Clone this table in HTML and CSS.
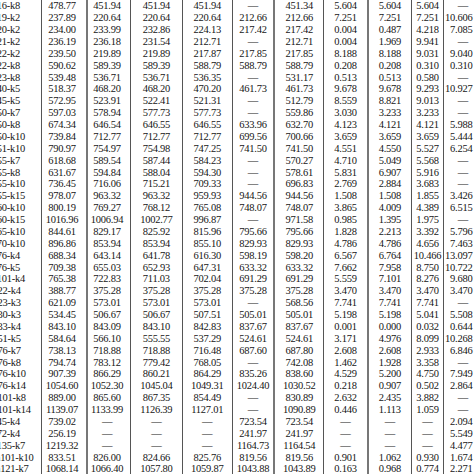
FILE: index.html
```html
<!DOCTYPE html>
<html>
<head>
<meta charset="utf-8">
<link rel="stylesheet" href="styles.css">
</head>
<body>
<div class="tbl">
<div class="r"><span>P-n16-k8</span><span>478.77</span><span>451.94</span><span>451.94</span><span>451.94</span><span class="d">—</span><span>451.34</span><span>5.604</span><span>5.604</span><span>5.604</span><span class="d">—</span></div>
<div class="r"><span>P-n19-k2</span><span>237.89</span><span>220.64</span><span>220.64</span><span>220.64</span><span>212.66</span><span>212.66</span><span>7.251</span><span>7.251</span><span>7.251</span><span>10.606</span></div>
<div class="r"><span>P-n20-k2</span><span>234.00</span><span>233.99</span><span>232.86</span><span>224.13</span><span>217.42</span><span>217.42</span><span>0.004</span><span>0.487</span><span>4.218</span><span>7.085</span></div>
<div class="r"><span>P-n21-k2</span><span>236.19</span><span>236.18</span><span>231.54</span><span>212.71</span><span class="d">—</span><span>212.71</span><span>0.004</span><span>1.969</span><span>9.941</span><span class="d">—</span></div>
<div class="r"><span>P-n22-k2</span><span>239.50</span><span>219.89</span><span>219.89</span><span>217.87</span><span>217.85</span><span>217.85</span><span>8.188</span><span>8.188</span><span>9.031</span><span>9.040</span></div>
<div class="r"><span>P-n22-k8</span><span>590.62</span><span>589.39</span><span>589.39</span><span>588.79</span><span>588.79</span><span>588.79</span><span>0.208</span><span>0.208</span><span>0.310</span><span>0.310</span></div>
<div class="r"><span>P-n23-k8</span><span>539.48</span><span>536.71</span><span>536.71</span><span>536.35</span><span class="d">—</span><span>531.17</span><span>0.513</span><span>0.513</span><span>0.580</span><span class="d">—</span></div>
<div class="r"><span>P-n40-k5</span><span>518.37</span><span>468.20</span><span>468.20</span><span>470.20</span><span>461.73</span><span>461.73</span><span>9.678</span><span>9.678</span><span>9.293</span><span>10.927</span></div>
<div class="r"><span>P-n45-k5</span><span>572.95</span><span>523.91</span><span>522.41</span><span>521.31</span><span class="d">—</span><span>512.79</span><span>8.559</span><span>8.821</span><span>9.013</span><span class="d">—</span></div>
<div class="r"><span>P-n50-k7</span><span>597.03</span><span>578.94</span><span>577.73</span><span>577.73</span><span class="d">—</span><span>559.86</span><span>3.030</span><span>3.233</span><span>3.233</span><span class="d">—</span></div>
<div class="r"><span>P-n50-k8</span><span>674.34</span><span>646.54</span><span>646.55</span><span>646.55</span><span>633.96</span><span>632.70</span><span>4.123</span><span>4.121</span><span>4.121</span><span>5.988</span></div>
<div class="r"><span>P-n50-k10</span><span>739.84</span><span>712.77</span><span>712.77</span><span>712.77</span><span>699.56</span><span>700.66</span><span>3.659</span><span>3.659</span><span>3.659</span><span>5.444</span></div>
<div class="r"><span>P-n51-k10</span><span>790.97</span><span>754.97</span><span>754.98</span><span>747.25</span><span>741.50</span><span>741.50</span><span>4.551</span><span>4.550</span><span>5.527</span><span>6.254</span></div>
<div class="r"><span>P-n55-k7</span><span>618.68</span><span>589.54</span><span>587.44</span><span>584.23</span><span class="d">—</span><span>570.27</span><span>4.710</span><span>5.049</span><span>5.568</span><span class="d">—</span></div>
<div class="r"><span>P-n55-k8</span><span>631.67</span><span>594.84</span><span>588.04</span><span>594.30</span><span class="d">—</span><span>578.61</span><span>5.831</span><span>6.907</span><span>5.916</span><span class="d">—</span></div>
<div class="r"><span>P-n55-k10</span><span>736.45</span><span>716.06</span><span>715.21</span><span>709.33</span><span class="d">—</span><span>696.83</span><span>2.769</span><span>2.884</span><span>3.683</span><span class="d">—</span></div>
<div class="r"><span>P-n55-k15</span><span>978.07</span><span>963.32</span><span>963.32</span><span>959.93</span><span>944.56</span><span>944.56</span><span>1.508</span><span>1.508</span><span>1.855</span><span>3.426</span></div>
<div class="r"><span>P-n60-k10</span><span>800.19</span><span>769.27</span><span>768.12</span><span>765.08</span><span>748.07</span><span>748.07</span><span>3.865</span><span>4.009</span><span>4.389</span><span>6.515</span></div>
<div class="r"><span>P-n60-k15</span><span>1016.96</span><span>1006.94</span><span>1002.77</span><span>996.87</span><span class="d">—</span><span>971.58</span><span>0.985</span><span>1.395</span><span>1.975</span><span class="d">—</span></div>
<div class="r"><span>P-n65-k10</span><span>844.61</span><span>829.17</span><span>825.92</span><span>815.96</span><span>795.66</span><span>795.66</span><span>1.828</span><span>2.213</span><span>3.392</span><span>5.796</span></div>
<div class="r"><span>P-n70-k10</span><span>896.86</span><span>853.94</span><span>853.94</span><span>855.10</span><span>829.93</span><span>829.93</span><span>4.786</span><span>4.786</span><span>4.656</span><span>7.463</span></div>
<div class="r"><span>P-n76-k4</span><span>688.34</span><span>643.14</span><span>641.78</span><span>616.30</span><span>598.19</span><span>598.20</span><span>6.567</span><span>6.764</span><span>10.466</span><span>13.097</span></div>
<div class="r"><span>P-n76-k5</span><span>709.38</span><span>655.03</span><span>652.93</span><span>647.31</span><span>633.32</span><span>633.32</span><span>7.662</span><span>7.958</span><span>8.750</span><span>10.722</span></div>
<div class="r"><span>P-n101-k4</span><span>765.38</span><span>722.83</span><span>711.03</span><span>702.04</span><span>691.29</span><span>691.29</span><span>5.559</span><span>7.101</span><span>8.276</span><span>9.680</span></div>
<div class="r"><span>E-n22-k4</span><span>388.77</span><span>375.28</span><span>375.28</span><span>375.28</span><span>375.28</span><span>375.28</span><span>3.470</span><span>3.470</span><span>3.470</span><span>3.470</span></div>
<div class="r"><span>E-n23-k3</span><span>621.09</span><span>573.01</span><span>573.01</span><span>573.01</span><span class="d">—</span><span>568.56</span><span>7.741</span><span>7.741</span><span>7.741</span><span class="d">—</span></div>
<div class="r"><span>E-n30-k3</span><span>534.45</span><span>506.67</span><span>506.67</span><span>507.51</span><span>505.01</span><span>505.01</span><span>5.198</span><span>5.198</span><span>5.041</span><span>5.508</span></div>
<div class="r"><span>E-n33-k4</span><span>843.10</span><span>843.09</span><span>843.10</span><span>842.83</span><span>837.67</span><span>837.67</span><span>0.001</span><span>0.000</span><span>0.032</span><span>0.644</span></div>
<div class="r"><span>E-n51-k5</span><span>584.64</span><span>566.10</span><span>555.55</span><span>537.29</span><span>524.61</span><span>524.61</span><span>3.171</span><span>4.976</span><span>8.099</span><span>10.268</span></div>
<div class="r"><span>E-n76-k7</span><span>738.13</span><span>718.88</span><span>718.88</span><span>716.48</span><span>687.60</span><span>687.80</span><span>2.608</span><span>2.608</span><span>2.933</span><span>6.846</span></div>
<div class="r"><span>E-n76-k8</span><span>794.74</span><span>783.12</span><span>779.42</span><span>768.05</span><span class="d">—</span><span>742.08</span><span>1.462</span><span>1.928</span><span>3.358</span><span class="d">—</span></div>
<div class="r"><span>E-n76-k10</span><span>907.39</span><span>866.29</span><span>860.21</span><span>864.29</span><span>835.26</span><span>838.60</span><span>4.529</span><span>5.200</span><span>4.750</span><span>7.949</span></div>
<div class="r"><span>E-n76-k14</span><span>1054.60</span><span>1052.30</span><span>1045.04</span><span>1049.31</span><span>1024.40</span><span>1030.52</span><span>0.218</span><span>0.907</span><span>0.502</span><span>2.864</span></div>
<div class="r"><span>E-n101-k8</span><span>889.00</span><span>865.60</span><span>867.35</span><span>854.49</span><span class="d">—</span><span>830.89</span><span>2.632</span><span>2.435</span><span>3.882</span><span class="d">—</span></div>
<div class="r"><span>E-n101-k14</span><span>1139.07</span><span>1133.99</span><span>1126.39</span><span>1127.01</span><span class="d">—</span><span>1090.89</span><span>0.446</span><span>1.113</span><span>1.059</span><span class="d">—</span></div>
<div class="r"><span>F-n45-k4</span><span>739.02</span><span class="d">—</span><span class="d">—</span><span class="d">—</span><span>723.54</span><span>723.54</span><span class="d">—</span><span class="d">—</span><span class="d">—</span><span>2.094</span></div>
<div class="r"><span>F-n72-k4</span><span>256.19</span><span class="d">—</span><span class="d">—</span><span class="d">—</span><span>241.97</span><span>241.97</span><span class="d">—</span><span class="d">—</span><span class="d">—</span><span>5.549</span></div>
<div class="r"><span>F-n135-k7</span><span>1219.32</span><span class="d">—</span><span class="d">—</span><span class="d">—</span><span>1164.73</span><span>1164.54</span><span class="d">—</span><span class="d">—</span><span class="d">—</span><span>4.477</span></div>
<div class="r"><span>M-n101-k10</span><span>833.51</span><span>826.00</span><span>824.66</span><span>825.76</span><span>819.56</span><span>819.56</span><span>0.901</span><span>1.062</span><span>0.930</span><span>1.674</span></div>
<div class="r"><span>M-n121-k7</span><span>1068.14</span><span>1066.40</span><span>1057.80</span><span>1059.87</span><span>1043.88</span><span>1043.89</span><span>0.163</span><span>0.968</span><span>0.774</span><span>2.271</span></div>
</div>
</body>
</html>
```

FILE: styles.css
```css
html, body {
  margin: 0;
  padding: 0;
  background: #fff;
  overflow: hidden;
  width: 474px;
  height: 474px;
}
.tbl {
  margin-left: -17px;
  font-family: "Liberation Serif", "Times New Roman", serif;
  font-size: 10.5px;
  letter-spacing: -0.25px;
  color: #151515;
}
.r {
  display: grid;
  grid-template-columns: 58px 45px 44px 51.7px 50px 41.6px 50px 43.4px 44.3px 32px 40px;
  height: 11.88px;
  line-height: 11.88px;
}
.r span {
  box-sizing: border-box;
  border-left: 1px solid #555;
  text-align: center;
  white-space: nowrap;
  padding-top: 0.3px;
}
.r span:first-child {
  border-left: none;
  text-align: left;
}
.r span:nth-child(2),
.r span:nth-child(3) {
  padding-right: 4px;
}
.r span:nth-child(3),
.r span:nth-child(7),
.r span:nth-child(9) {
  border-left: 2px solid #777;
}
.r span:nth-child(11) {
  text-align: right;
  padding-right: 10.5px;
}
.r span:nth-child(11).d {
  padding-right: 15px;
}
```
